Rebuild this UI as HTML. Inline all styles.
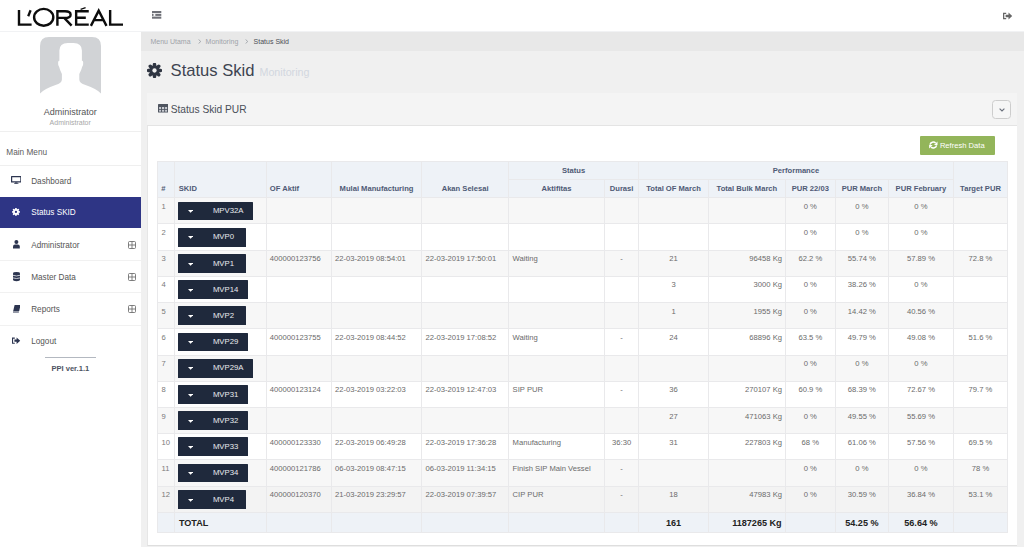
<!DOCTYPE html><html><head><meta charset="utf-8"><style>
html,body{margin:0;padding:0;width:1024px;height:547px;overflow:hidden;background:#fff;font-family:"Liberation Sans",sans-serif;}
div{box-sizing:border-box;}
</style></head><body><div style="position:relative;width:1024px;height:547px;overflow:hidden;">
<div style="position:absolute;left:0.00px;top:0.00px;width:1024.00px;height:31.00px;background:#ffffff;"></div>
<div style="position:absolute;left:0.00px;top:31.00px;width:1024.00px;height:1.00px;background:#f1f2f4;"></div>
<div style="position:absolute;left:141.00px;top:32.00px;width:883.00px;height:515.00px;background:#f0f0f0;"></div>
<div style="position:absolute;left:141.00px;top:32.00px;width:883.00px;height:19.00px;background:#e8e8e8;"></div>
<div style="position:absolute;left:0.00px;top:32.00px;width:141.00px;height:515.00px;background:#ffffff;"></div>
<svg style="position:absolute;left:0;top:0" width="140" height="31" viewBox="0 0 140 31"><g fill="none" stroke="#0d0d0d" stroke-width="2.4"><path d="M19 10.1 V24.6 H31.6"/><path d="M30.6 10.2 L28.2 16.2" stroke-width="2.3"/><ellipse cx="43.7" cy="17.3" rx="9.6" ry="8.4"/><path d="M57.4 25.7 V11.3 H65 Q70.6 11.3 70.6 14.65 Q70.6 17.9 65 17.9 H57.4 M64.2 17.9 L71.6 25.7"/><path d="M88.75 11.3 H76.15 V24.6 H88.75 M76.15 17.8 H85.8"/><path d="M80.6 9.3 L85.6 7.6" stroke-width="1.3"/><path d="M90.9 25.9 L98.7 10.6 L106.5 25.9 M93.6 20.15 H103.8"/><path d="M110.15 10.1 V24.6 H123"/></g></svg>
<svg style="position:absolute;left:151px;top:10px" width="12" height="10" viewBox="0 0 12 10"><g fill="#6f7178"><rect x="1" y="1" width="9.3" height="2.1"/><rect x="4.3" y="3.9" width="6" height="2"/><rect x="1" y="6.6" width="9.3" height="2.1"/><path d="M1 3.6 L3.5 4.9 L1 6.2Z"/></g></svg>
<svg style="position:absolute;left:1003px;top:11.5px" width="10" height="8" viewBox="0 0 10 8"><g fill="#666"><path d="M0 0.8 H3.2 V2 H1.3 V6 H3.2 V7.2 H0Z"/><path d="M2.6 2.8 H5.5 V0.6 L9.2 4 L5.5 7.4 V5.2 H2.6Z"/></g></svg>
<div style="position:absolute;left:150.50px;top:31.77px;line-height:20px;font-size:7px;color:#9ea3a9;font-weight:normal;white-space:nowrap;">Menu Utama</div>
<svg style="position:absolute;left:197.6px;top:39.4px" width="3.4" height="5" viewBox="0 0 3.4 5"><path d="M0.6 0.5 L2.8 2.5 L0.6 4.5" fill="none" stroke="#9ea3a9" stroke-width="0.9"/></svg>
<div style="position:absolute;left:205.60px;top:31.77px;line-height:20px;font-size:7px;color:#9ea3a9;font-weight:normal;white-space:nowrap;">Monitoring</div>
<svg style="position:absolute;left:245.2px;top:39.4px" width="3.4" height="5" viewBox="0 0 3.4 5"><path d="M0.6 0.5 L2.8 2.5 L0.6 4.5" fill="none" stroke="#9ea3a9" stroke-width="0.9"/></svg>
<div style="position:absolute;left:253.60px;top:31.77px;line-height:20px;font-size:7px;color:#4b4f56;font-weight:normal;white-space:nowrap;">Status Skid</div>
<svg style="position:absolute;left:146.9px;top:62.6px" width="15" height="15" viewBox="0 0 16 16"><circle cx="8" cy="8" r="5.5" fill="#2f3542"/><path d="M12.00 8.00 L14.40 8.00 M10.83 10.83 L12.53 12.53 M8.00 12.00 L8.00 14.40 M5.17 10.83 L3.47 12.53 M4.00 8.00 L1.60 8.00 M5.17 5.17 L3.47 3.47 M8.00 4.00 L8.00 1.60 M10.83 5.17 L12.53 3.47 " stroke="#2f3542" stroke-width="3.7" stroke-linecap="round"/><circle cx="8" cy="8" r="2.3" fill="#f0f0f0"/></svg>
<div style="position:absolute;left:170.60px;top:60.85px;line-height:20px;font-size:16.6px;color:#3d4450;font-weight:normal;white-space:nowrap;">Status Skid</div>
<div style="position:absolute;left:259.50px;top:62.19px;line-height:20px;font-size:10.7px;color:#d2d7df;font-weight:normal;white-space:nowrap;">Monitoring</div>
<div style="position:absolute;left:146.60px;top:93.00px;width:870.60px;height:452.80px;background:#ffffff;border-left:1px solid #e6e6e6;border-bottom:1px solid #dedede;"></div>
<div style="position:absolute;left:147.40px;top:93.00px;width:869.80px;height:33.00px;background:#f4f4f4;border-bottom:1px solid #e4e4e4;"></div>
<svg style="position:absolute;left:157.8px;top:104.3px" width="10.2" height="8.6" viewBox="0 0 10.2 8.6"><rect width="10.2" height="8.6" rx="0.6" fill="#4f5560"/><g fill="#c9ccd2"><rect x="1.1" y="3.0" width="2.0" height="2.0"/><rect x="4.0" y="3.0" width="2.2" height="2.0"/><rect x="7.1" y="3.0" width="2.0" height="2.0"/><rect x="1.1" y="5.8" width="2.0" height="1.9"/><rect x="4.0" y="5.8" width="2.2" height="1.9"/><rect x="7.1" y="5.8" width="2.0" height="1.9"/></g></svg>
<div style="position:absolute;left:170.70px;top:100.07px;line-height:20px;font-size:10.2px;color:#4a4f59;font-weight:normal;white-space:nowrap;">Status Skid PUR</div>
<div style="position:absolute;left:992px;top:100.2px;width:19px;height:19px;border:1.2px solid #cdcdcd;border-radius:3.5px;background:#f6f6f6;"></div>
<svg style="position:absolute;left:999px;top:107.5px" width="6" height="4" viewBox="0 0 6 4"><path d="M0.6 0.6 L3 3 L5.4 0.6" fill="none" stroke="#6a707c" stroke-width="1.15"/></svg>
<div style="position:absolute;left:919.80px;top:135.80px;width:75.30px;height:19.20px;background:#93b55a;border-radius:1px;"></div>
<svg style="position:absolute;left:929.4px;top:140.9px" width="8.6" height="8" viewBox="0 0 8.6 8"><g fill="none" stroke="#fff" stroke-width="1.5"><path d="M1 3.7 A3.3 3.3 0 0 1 6.6 2.1"/><path d="M7.6 4.3 A3.3 3.3 0 0 1 2 5.9"/></g><g fill="#fff"><path d="M5 4 H8.5 V0.5Z"/><path d="M3.6 4 H0.1 V7.5Z"/></g></svg>
<div style="position:absolute;left:939.90px;top:136.07px;line-height:20px;font-size:7.6px;color:#ffffff;font-weight:normal;white-space:nowrap;">Refresh Data</div>
<div style="position:absolute;left:157.30px;top:161.50px;width:850.30px;height:36.20px;background:#eef2f7;"></div>
<div style="position:absolute;left:157.30px;top:197.70px;width:850.30px;height:26.22px;background:#f7f7f7;"></div>
<div style="position:absolute;left:157.30px;top:223.92px;width:850.30px;height:26.22px;background:#ffffff;"></div>
<div style="position:absolute;left:157.30px;top:250.14px;width:850.30px;height:26.22px;background:#f7f7f7;"></div>
<div style="position:absolute;left:157.30px;top:276.36px;width:850.30px;height:26.22px;background:#ffffff;"></div>
<div style="position:absolute;left:157.30px;top:302.58px;width:850.30px;height:26.22px;background:#f7f7f7;"></div>
<div style="position:absolute;left:157.30px;top:328.80px;width:850.30px;height:26.22px;background:#ffffff;"></div>
<div style="position:absolute;left:157.30px;top:355.02px;width:850.30px;height:26.22px;background:#f7f7f7;"></div>
<div style="position:absolute;left:157.30px;top:381.24px;width:850.30px;height:26.22px;background:#ffffff;"></div>
<div style="position:absolute;left:157.30px;top:407.46px;width:850.30px;height:26.22px;background:#f7f7f7;"></div>
<div style="position:absolute;left:157.30px;top:433.68px;width:850.30px;height:26.22px;background:#ffffff;"></div>
<div style="position:absolute;left:157.30px;top:459.90px;width:850.30px;height:26.22px;background:#f7f7f7;"></div>
<div style="position:absolute;left:157.30px;top:486.12px;width:850.30px;height:26.22px;background:#f3f3f3;"></div>
<div style="position:absolute;left:157.30px;top:512.34px;width:850.30px;height:20.16px;background:#eef2f7;"></div>
<div style="position:absolute;left:157.30px;top:161.00px;width:850.30px;height:1.00px;background:#e9e9eb;"></div>
<div style="position:absolute;left:508.60px;top:179.10px;width:444.80px;height:1.00px;background:#e9e9eb;"></div>
<div style="position:absolute;left:157.30px;top:197.20px;width:850.30px;height:1.00px;background:#e9e9eb;"></div>
<div style="position:absolute;left:157.30px;top:223.42px;width:850.30px;height:1.00px;background:#e9e9eb;"></div>
<div style="position:absolute;left:157.30px;top:249.64px;width:850.30px;height:1.00px;background:#e9e9eb;"></div>
<div style="position:absolute;left:157.30px;top:275.86px;width:850.30px;height:1.00px;background:#e9e9eb;"></div>
<div style="position:absolute;left:157.30px;top:302.08px;width:850.30px;height:1.00px;background:#e9e9eb;"></div>
<div style="position:absolute;left:157.30px;top:328.30px;width:850.30px;height:1.00px;background:#e9e9eb;"></div>
<div style="position:absolute;left:157.30px;top:354.52px;width:850.30px;height:1.00px;background:#e9e9eb;"></div>
<div style="position:absolute;left:157.30px;top:380.74px;width:850.30px;height:1.00px;background:#e9e9eb;"></div>
<div style="position:absolute;left:157.30px;top:406.96px;width:850.30px;height:1.00px;background:#e9e9eb;"></div>
<div style="position:absolute;left:157.30px;top:433.18px;width:850.30px;height:1.00px;background:#e9e9eb;"></div>
<div style="position:absolute;left:157.30px;top:459.40px;width:850.30px;height:1.00px;background:#e9e9eb;"></div>
<div style="position:absolute;left:157.30px;top:485.62px;width:850.30px;height:1.00px;background:#e9e9eb;"></div>
<div style="position:absolute;left:157.30px;top:511.84px;width:850.30px;height:1.00px;background:#e9e9eb;"></div>
<div style="position:absolute;left:157.30px;top:532.00px;width:850.30px;height:1.00px;background:#e9e9eb;"></div>
<div style="position:absolute;left:156.80px;top:161.50px;width:1.00px;height:371.00px;background:#e9e9eb;"></div>
<div style="position:absolute;left:173.80px;top:161.50px;width:1.00px;height:371.00px;background:#e9e9eb;"></div>
<div style="position:absolute;left:265.90px;top:161.50px;width:1.00px;height:371.00px;background:#e9e9eb;"></div>
<div style="position:absolute;left:330.90px;top:161.50px;width:1.00px;height:371.00px;background:#e9e9eb;"></div>
<div style="position:absolute;left:421.10px;top:161.50px;width:1.00px;height:371.00px;background:#e9e9eb;"></div>
<div style="position:absolute;left:508.10px;top:161.50px;width:1.00px;height:371.00px;background:#e9e9eb;"></div>
<div style="position:absolute;left:604.10px;top:179.60px;width:1.00px;height:352.90px;background:#e9e9eb;"></div>
<div style="position:absolute;left:638.10px;top:161.50px;width:1.00px;height:371.00px;background:#e9e9eb;"></div>
<div style="position:absolute;left:708.00px;top:179.60px;width:1.00px;height:352.90px;background:#e9e9eb;"></div>
<div style="position:absolute;left:784.80px;top:179.60px;width:1.00px;height:352.90px;background:#e9e9eb;"></div>
<div style="position:absolute;left:834.80px;top:179.60px;width:1.00px;height:352.90px;background:#e9e9eb;"></div>
<div style="position:absolute;left:888.00px;top:179.60px;width:1.00px;height:352.90px;background:#e9e9eb;"></div>
<div style="position:absolute;left:952.90px;top:161.50px;width:1.00px;height:371.00px;background:#e9e9eb;"></div>
<div style="position:absolute;left:1007.10px;top:161.50px;width:1.00px;height:371.00px;background:#e9e9eb;"></div>
<div style="position:absolute;left:161.30px;top:178.77px;line-height:20px;font-size:7.6px;color:#4f5a75;font-weight:bold;white-space:nowrap;">#</div>
<div style="position:absolute;left:178.80px;top:178.77px;line-height:20px;font-size:7.6px;color:#4f5a75;font-weight:bold;white-space:nowrap;">SKID</div>
<div style="position:absolute;left:269.80px;top:178.77px;line-height:20px;font-size:7.6px;color:#4f5a75;font-weight:bold;white-space:nowrap;">OF Aktif</div>
<div style="position:absolute;left:276.50px;width:200px;text-align:center;top:178.77px;line-height:20px;font-size:7.6px;color:#4f5a75;font-weight:bold;white-space:nowrap;">Mulai Manufacturing</div>
<div style="position:absolute;left:365.10px;width:200px;text-align:center;top:178.77px;line-height:20px;font-size:7.6px;color:#4f5a75;font-weight:bold;white-space:nowrap;">Akan Selesai</div>
<div style="position:absolute;left:473.60px;width:200px;text-align:center;top:160.67px;line-height:20px;font-size:7.6px;color:#4f5a75;font-weight:bold;white-space:nowrap;">Status</div>
<div style="position:absolute;left:696.00px;width:200px;text-align:center;top:160.67px;line-height:20px;font-size:7.6px;color:#4f5a75;font-weight:bold;white-space:nowrap;">Performance</div>
<div style="position:absolute;left:456.60px;width:200px;text-align:center;top:178.77px;line-height:20px;font-size:7.6px;color:#4f5a75;font-weight:bold;white-space:nowrap;">Aktifitas</div>
<div style="position:absolute;left:521.60px;width:200px;text-align:center;top:178.77px;line-height:20px;font-size:7.6px;color:#4f5a75;font-weight:bold;white-space:nowrap;">Durasi</div>
<div style="position:absolute;left:573.55px;width:200px;text-align:center;top:178.77px;line-height:20px;font-size:7.6px;color:#4f5a75;font-weight:bold;white-space:nowrap;">Total OF March</div>
<div style="position:absolute;left:646.90px;width:200px;text-align:center;top:178.77px;line-height:20px;font-size:7.6px;color:#4f5a75;font-weight:bold;white-space:nowrap;">Total Bulk March</div>
<div style="position:absolute;left:710.30px;width:200px;text-align:center;top:178.77px;line-height:20px;font-size:7.6px;color:#4f5a75;font-weight:bold;white-space:nowrap;">PUR 22/03</div>
<div style="position:absolute;left:761.90px;width:200px;text-align:center;top:178.77px;line-height:20px;font-size:7.6px;color:#4f5a75;font-weight:bold;white-space:nowrap;">PUR March</div>
<div style="position:absolute;left:820.95px;width:200px;text-align:center;top:178.77px;line-height:20px;font-size:7.6px;color:#4f5a75;font-weight:bold;white-space:nowrap;">PUR February</div>
<div style="position:absolute;left:880.50px;width:200px;text-align:center;top:178.77px;line-height:20px;font-size:7.6px;color:#4f5a75;font-weight:bold;white-space:nowrap;">Target PUR</div>
<div style="position:absolute;left:161.50px;top:196.75px;line-height:20px;font-size:7.65px;color:#7a7a7a;font-weight:normal;white-space:nowrap;">1</div>
<div style="position:absolute;left:178.1px;top:201.50px;width:75.00px;height:18.8px;background:#1f293c;border-radius:0.6px;"></div>
<svg style="position:absolute;left:188.2px;top:210.10px" width="5.2" height="3" viewBox="0 0 5.2 3"><path d="M0 0 H5.2 L2.6 2.8Z" fill="#fff"/></svg>
<div style="position:absolute;left:212.90px;top:201.11px;line-height:20px;font-size:7.75px;color:#e9ebf0;font-weight:normal;white-space:nowrap;">MPV32A</div>
<div style="position:absolute;left:269.80px;top:196.75px;line-height:20px;font-size:7.65px;color:#6b6b6b;font-weight:normal;white-space:nowrap;"></div>
<div style="position:absolute;left:334.90px;top:196.75px;line-height:20px;font-size:7.65px;color:#6b6b6b;font-weight:normal;white-space:nowrap;"></div>
<div style="position:absolute;left:425.40px;top:196.75px;line-height:20px;font-size:7.65px;color:#6b6b6b;font-weight:normal;white-space:nowrap;"></div>
<div style="position:absolute;left:512.60px;top:196.75px;line-height:20px;font-size:7.65px;color:#6b6b6b;font-weight:normal;white-space:nowrap;"></div>
<div style="position:absolute;left:521.60px;width:200px;text-align:center;top:196.75px;line-height:20px;font-size:7.65px;color:#6b6b6b;font-weight:normal;white-space:nowrap;"></div>
<div style="position:absolute;left:573.55px;width:200px;text-align:center;top:196.75px;line-height:20px;font-size:7.65px;color:#6b6b6b;font-weight:normal;white-space:nowrap;"></div>
<div style="position:absolute;left:482.00px;width:300px;text-align:right;top:196.75px;line-height:20px;font-size:7.65px;color:#6b6b6b;font-weight:normal;white-space:nowrap;"></div>
<div style="position:absolute;left:710.30px;width:200px;text-align:center;top:196.75px;line-height:20px;font-size:7.65px;color:#6b6b6b;font-weight:normal;white-space:nowrap;">0 %</div>
<div style="position:absolute;left:761.90px;width:200px;text-align:center;top:196.75px;line-height:20px;font-size:7.65px;color:#6b6b6b;font-weight:normal;white-space:nowrap;">0 %</div>
<div style="position:absolute;left:820.95px;width:200px;text-align:center;top:196.75px;line-height:20px;font-size:7.65px;color:#6b6b6b;font-weight:normal;white-space:nowrap;">0 %</div>
<div style="position:absolute;left:880.50px;width:200px;text-align:center;top:196.75px;line-height:20px;font-size:7.65px;color:#6b6b6b;font-weight:normal;white-space:nowrap;"></div>
<div style="position:absolute;left:161.50px;top:222.97px;line-height:20px;font-size:7.65px;color:#7a7a7a;font-weight:normal;white-space:nowrap;">2</div>
<div style="position:absolute;left:178.1px;top:227.72px;width:68.30px;height:18.8px;background:#1f293c;border-radius:0.6px;"></div>
<svg style="position:absolute;left:188.2px;top:236.32px" width="5.2" height="3" viewBox="0 0 5.2 3"><path d="M0 0 H5.2 L2.6 2.8Z" fill="#fff"/></svg>
<div style="position:absolute;left:212.90px;top:227.33px;line-height:20px;font-size:7.75px;color:#e9ebf0;font-weight:normal;white-space:nowrap;">MVP0</div>
<div style="position:absolute;left:269.80px;top:222.97px;line-height:20px;font-size:7.65px;color:#6b6b6b;font-weight:normal;white-space:nowrap;"></div>
<div style="position:absolute;left:334.90px;top:222.97px;line-height:20px;font-size:7.65px;color:#6b6b6b;font-weight:normal;white-space:nowrap;"></div>
<div style="position:absolute;left:425.40px;top:222.97px;line-height:20px;font-size:7.65px;color:#6b6b6b;font-weight:normal;white-space:nowrap;"></div>
<div style="position:absolute;left:512.60px;top:222.97px;line-height:20px;font-size:7.65px;color:#6b6b6b;font-weight:normal;white-space:nowrap;"></div>
<div style="position:absolute;left:521.60px;width:200px;text-align:center;top:222.97px;line-height:20px;font-size:7.65px;color:#6b6b6b;font-weight:normal;white-space:nowrap;"></div>
<div style="position:absolute;left:573.55px;width:200px;text-align:center;top:222.97px;line-height:20px;font-size:7.65px;color:#6b6b6b;font-weight:normal;white-space:nowrap;"></div>
<div style="position:absolute;left:482.00px;width:300px;text-align:right;top:222.97px;line-height:20px;font-size:7.65px;color:#6b6b6b;font-weight:normal;white-space:nowrap;"></div>
<div style="position:absolute;left:710.30px;width:200px;text-align:center;top:222.97px;line-height:20px;font-size:7.65px;color:#6b6b6b;font-weight:normal;white-space:nowrap;">0 %</div>
<div style="position:absolute;left:761.90px;width:200px;text-align:center;top:222.97px;line-height:20px;font-size:7.65px;color:#6b6b6b;font-weight:normal;white-space:nowrap;">0 %</div>
<div style="position:absolute;left:820.95px;width:200px;text-align:center;top:222.97px;line-height:20px;font-size:7.65px;color:#6b6b6b;font-weight:normal;white-space:nowrap;">0 %</div>
<div style="position:absolute;left:880.50px;width:200px;text-align:center;top:222.97px;line-height:20px;font-size:7.65px;color:#6b6b6b;font-weight:normal;white-space:nowrap;"></div>
<div style="position:absolute;left:161.50px;top:249.19px;line-height:20px;font-size:7.65px;color:#7a7a7a;font-weight:normal;white-space:nowrap;">3</div>
<div style="position:absolute;left:178.1px;top:253.94px;width:68.30px;height:18.8px;background:#1f293c;border-radius:0.6px;"></div>
<svg style="position:absolute;left:188.2px;top:262.54px" width="5.2" height="3" viewBox="0 0 5.2 3"><path d="M0 0 H5.2 L2.6 2.8Z" fill="#fff"/></svg>
<div style="position:absolute;left:212.90px;top:253.55px;line-height:20px;font-size:7.75px;color:#e9ebf0;font-weight:normal;white-space:nowrap;">MVP1</div>
<div style="position:absolute;left:269.80px;top:249.19px;line-height:20px;font-size:7.65px;color:#6b6b6b;font-weight:normal;white-space:nowrap;">400000123756</div>
<div style="position:absolute;left:334.90px;top:249.19px;line-height:20px;font-size:7.65px;color:#6b6b6b;font-weight:normal;white-space:nowrap;">22-03-2019 08:54:01</div>
<div style="position:absolute;left:425.40px;top:249.19px;line-height:20px;font-size:7.65px;color:#6b6b6b;font-weight:normal;white-space:nowrap;">22-03-2019 17:50:01</div>
<div style="position:absolute;left:512.60px;top:249.19px;line-height:20px;font-size:7.65px;color:#6b6b6b;font-weight:normal;white-space:nowrap;">Waiting</div>
<div style="position:absolute;left:521.60px;width:200px;text-align:center;top:249.19px;line-height:20px;font-size:7.65px;color:#6b6b6b;font-weight:normal;white-space:nowrap;">-</div>
<div style="position:absolute;left:573.55px;width:200px;text-align:center;top:249.19px;line-height:20px;font-size:7.65px;color:#6b6b6b;font-weight:normal;white-space:nowrap;">21</div>
<div style="position:absolute;left:482.00px;width:300px;text-align:right;top:249.19px;line-height:20px;font-size:7.65px;color:#6b6b6b;font-weight:normal;white-space:nowrap;">96458 Kg</div>
<div style="position:absolute;left:710.30px;width:200px;text-align:center;top:249.19px;line-height:20px;font-size:7.65px;color:#6b6b6b;font-weight:normal;white-space:nowrap;">62.2 %</div>
<div style="position:absolute;left:761.90px;width:200px;text-align:center;top:249.19px;line-height:20px;font-size:7.65px;color:#6b6b6b;font-weight:normal;white-space:nowrap;">55.74 %</div>
<div style="position:absolute;left:820.95px;width:200px;text-align:center;top:249.19px;line-height:20px;font-size:7.65px;color:#6b6b6b;font-weight:normal;white-space:nowrap;">57.89 %</div>
<div style="position:absolute;left:880.50px;width:200px;text-align:center;top:249.19px;line-height:20px;font-size:7.65px;color:#6b6b6b;font-weight:normal;white-space:nowrap;">72.8 %</div>
<div style="position:absolute;left:161.50px;top:275.41px;line-height:20px;font-size:7.65px;color:#7a7a7a;font-weight:normal;white-space:nowrap;">4</div>
<div style="position:absolute;left:178.1px;top:280.16px;width:70.20px;height:18.8px;background:#1f293c;border-radius:0.6px;"></div>
<svg style="position:absolute;left:188.2px;top:288.76px" width="5.2" height="3" viewBox="0 0 5.2 3"><path d="M0 0 H5.2 L2.6 2.8Z" fill="#fff"/></svg>
<div style="position:absolute;left:212.90px;top:279.77px;line-height:20px;font-size:7.75px;color:#e9ebf0;font-weight:normal;white-space:nowrap;">MVP14</div>
<div style="position:absolute;left:269.80px;top:275.41px;line-height:20px;font-size:7.65px;color:#6b6b6b;font-weight:normal;white-space:nowrap;"></div>
<div style="position:absolute;left:334.90px;top:275.41px;line-height:20px;font-size:7.65px;color:#6b6b6b;font-weight:normal;white-space:nowrap;"></div>
<div style="position:absolute;left:425.40px;top:275.41px;line-height:20px;font-size:7.65px;color:#6b6b6b;font-weight:normal;white-space:nowrap;"></div>
<div style="position:absolute;left:512.60px;top:275.41px;line-height:20px;font-size:7.65px;color:#6b6b6b;font-weight:normal;white-space:nowrap;"></div>
<div style="position:absolute;left:521.60px;width:200px;text-align:center;top:275.41px;line-height:20px;font-size:7.65px;color:#6b6b6b;font-weight:normal;white-space:nowrap;"></div>
<div style="position:absolute;left:573.55px;width:200px;text-align:center;top:275.41px;line-height:20px;font-size:7.65px;color:#6b6b6b;font-weight:normal;white-space:nowrap;">3</div>
<div style="position:absolute;left:482.00px;width:300px;text-align:right;top:275.41px;line-height:20px;font-size:7.65px;color:#6b6b6b;font-weight:normal;white-space:nowrap;">3000 Kg</div>
<div style="position:absolute;left:710.30px;width:200px;text-align:center;top:275.41px;line-height:20px;font-size:7.65px;color:#6b6b6b;font-weight:normal;white-space:nowrap;">0 %</div>
<div style="position:absolute;left:761.90px;width:200px;text-align:center;top:275.41px;line-height:20px;font-size:7.65px;color:#6b6b6b;font-weight:normal;white-space:nowrap;">38.26 %</div>
<div style="position:absolute;left:820.95px;width:200px;text-align:center;top:275.41px;line-height:20px;font-size:7.65px;color:#6b6b6b;font-weight:normal;white-space:nowrap;">0 %</div>
<div style="position:absolute;left:880.50px;width:200px;text-align:center;top:275.41px;line-height:20px;font-size:7.65px;color:#6b6b6b;font-weight:normal;white-space:nowrap;"></div>
<div style="position:absolute;left:161.50px;top:301.63px;line-height:20px;font-size:7.65px;color:#7a7a7a;font-weight:normal;white-space:nowrap;">5</div>
<div style="position:absolute;left:178.1px;top:306.38px;width:68.30px;height:18.8px;background:#1f293c;border-radius:0.6px;"></div>
<svg style="position:absolute;left:188.2px;top:314.98px" width="5.2" height="3" viewBox="0 0 5.2 3"><path d="M0 0 H5.2 L2.6 2.8Z" fill="#fff"/></svg>
<div style="position:absolute;left:212.90px;top:305.99px;line-height:20px;font-size:7.75px;color:#e9ebf0;font-weight:normal;white-space:nowrap;">MVP2</div>
<div style="position:absolute;left:269.80px;top:301.63px;line-height:20px;font-size:7.65px;color:#6b6b6b;font-weight:normal;white-space:nowrap;"></div>
<div style="position:absolute;left:334.90px;top:301.63px;line-height:20px;font-size:7.65px;color:#6b6b6b;font-weight:normal;white-space:nowrap;"></div>
<div style="position:absolute;left:425.40px;top:301.63px;line-height:20px;font-size:7.65px;color:#6b6b6b;font-weight:normal;white-space:nowrap;"></div>
<div style="position:absolute;left:512.60px;top:301.63px;line-height:20px;font-size:7.65px;color:#6b6b6b;font-weight:normal;white-space:nowrap;"></div>
<div style="position:absolute;left:521.60px;width:200px;text-align:center;top:301.63px;line-height:20px;font-size:7.65px;color:#6b6b6b;font-weight:normal;white-space:nowrap;"></div>
<div style="position:absolute;left:573.55px;width:200px;text-align:center;top:301.63px;line-height:20px;font-size:7.65px;color:#6b6b6b;font-weight:normal;white-space:nowrap;">1</div>
<div style="position:absolute;left:482.00px;width:300px;text-align:right;top:301.63px;line-height:20px;font-size:7.65px;color:#6b6b6b;font-weight:normal;white-space:nowrap;">1955 Kg</div>
<div style="position:absolute;left:710.30px;width:200px;text-align:center;top:301.63px;line-height:20px;font-size:7.65px;color:#6b6b6b;font-weight:normal;white-space:nowrap;">0 %</div>
<div style="position:absolute;left:761.90px;width:200px;text-align:center;top:301.63px;line-height:20px;font-size:7.65px;color:#6b6b6b;font-weight:normal;white-space:nowrap;">14.42 %</div>
<div style="position:absolute;left:820.95px;width:200px;text-align:center;top:301.63px;line-height:20px;font-size:7.65px;color:#6b6b6b;font-weight:normal;white-space:nowrap;">40.56 %</div>
<div style="position:absolute;left:880.50px;width:200px;text-align:center;top:301.63px;line-height:20px;font-size:7.65px;color:#6b6b6b;font-weight:normal;white-space:nowrap;"></div>
<div style="position:absolute;left:161.50px;top:327.85px;line-height:20px;font-size:7.65px;color:#7a7a7a;font-weight:normal;white-space:nowrap;">6</div>
<div style="position:absolute;left:178.1px;top:332.60px;width:70.20px;height:18.8px;background:#1f293c;border-radius:0.6px;"></div>
<svg style="position:absolute;left:188.2px;top:341.20px" width="5.2" height="3" viewBox="0 0 5.2 3"><path d="M0 0 H5.2 L2.6 2.8Z" fill="#fff"/></svg>
<div style="position:absolute;left:212.90px;top:332.21px;line-height:20px;font-size:7.75px;color:#e9ebf0;font-weight:normal;white-space:nowrap;">MVP29</div>
<div style="position:absolute;left:269.80px;top:327.85px;line-height:20px;font-size:7.65px;color:#6b6b6b;font-weight:normal;white-space:nowrap;">400000123755</div>
<div style="position:absolute;left:334.90px;top:327.85px;line-height:20px;font-size:7.65px;color:#6b6b6b;font-weight:normal;white-space:nowrap;">22-03-2019 08:44:52</div>
<div style="position:absolute;left:425.40px;top:327.85px;line-height:20px;font-size:7.65px;color:#6b6b6b;font-weight:normal;white-space:nowrap;">22-03-2019 17:08:52</div>
<div style="position:absolute;left:512.60px;top:327.85px;line-height:20px;font-size:7.65px;color:#6b6b6b;font-weight:normal;white-space:nowrap;">Waiting</div>
<div style="position:absolute;left:521.60px;width:200px;text-align:center;top:327.85px;line-height:20px;font-size:7.65px;color:#6b6b6b;font-weight:normal;white-space:nowrap;">-</div>
<div style="position:absolute;left:573.55px;width:200px;text-align:center;top:327.85px;line-height:20px;font-size:7.65px;color:#6b6b6b;font-weight:normal;white-space:nowrap;">24</div>
<div style="position:absolute;left:482.00px;width:300px;text-align:right;top:327.85px;line-height:20px;font-size:7.65px;color:#6b6b6b;font-weight:normal;white-space:nowrap;">68896 Kg</div>
<div style="position:absolute;left:710.30px;width:200px;text-align:center;top:327.85px;line-height:20px;font-size:7.65px;color:#6b6b6b;font-weight:normal;white-space:nowrap;">63.5 %</div>
<div style="position:absolute;left:761.90px;width:200px;text-align:center;top:327.85px;line-height:20px;font-size:7.65px;color:#6b6b6b;font-weight:normal;white-space:nowrap;">49.79 %</div>
<div style="position:absolute;left:820.95px;width:200px;text-align:center;top:327.85px;line-height:20px;font-size:7.65px;color:#6b6b6b;font-weight:normal;white-space:nowrap;">49.08 %</div>
<div style="position:absolute;left:880.50px;width:200px;text-align:center;top:327.85px;line-height:20px;font-size:7.65px;color:#6b6b6b;font-weight:normal;white-space:nowrap;">51.6 %</div>
<div style="position:absolute;left:161.50px;top:354.07px;line-height:20px;font-size:7.65px;color:#7a7a7a;font-weight:normal;white-space:nowrap;">7</div>
<div style="position:absolute;left:178.1px;top:358.82px;width:75.00px;height:18.8px;background:#1f293c;border-radius:0.6px;"></div>
<svg style="position:absolute;left:188.2px;top:367.42px" width="5.2" height="3" viewBox="0 0 5.2 3"><path d="M0 0 H5.2 L2.6 2.8Z" fill="#fff"/></svg>
<div style="position:absolute;left:212.90px;top:358.43px;line-height:20px;font-size:7.75px;color:#e9ebf0;font-weight:normal;white-space:nowrap;">MVP29A</div>
<div style="position:absolute;left:269.80px;top:354.07px;line-height:20px;font-size:7.65px;color:#6b6b6b;font-weight:normal;white-space:nowrap;"></div>
<div style="position:absolute;left:334.90px;top:354.07px;line-height:20px;font-size:7.65px;color:#6b6b6b;font-weight:normal;white-space:nowrap;"></div>
<div style="position:absolute;left:425.40px;top:354.07px;line-height:20px;font-size:7.65px;color:#6b6b6b;font-weight:normal;white-space:nowrap;"></div>
<div style="position:absolute;left:512.60px;top:354.07px;line-height:20px;font-size:7.65px;color:#6b6b6b;font-weight:normal;white-space:nowrap;"></div>
<div style="position:absolute;left:521.60px;width:200px;text-align:center;top:354.07px;line-height:20px;font-size:7.65px;color:#6b6b6b;font-weight:normal;white-space:nowrap;"></div>
<div style="position:absolute;left:573.55px;width:200px;text-align:center;top:354.07px;line-height:20px;font-size:7.65px;color:#6b6b6b;font-weight:normal;white-space:nowrap;"></div>
<div style="position:absolute;left:482.00px;width:300px;text-align:right;top:354.07px;line-height:20px;font-size:7.65px;color:#6b6b6b;font-weight:normal;white-space:nowrap;"></div>
<div style="position:absolute;left:710.30px;width:200px;text-align:center;top:354.07px;line-height:20px;font-size:7.65px;color:#6b6b6b;font-weight:normal;white-space:nowrap;">0 %</div>
<div style="position:absolute;left:761.90px;width:200px;text-align:center;top:354.07px;line-height:20px;font-size:7.65px;color:#6b6b6b;font-weight:normal;white-space:nowrap;">0 %</div>
<div style="position:absolute;left:820.95px;width:200px;text-align:center;top:354.07px;line-height:20px;font-size:7.65px;color:#6b6b6b;font-weight:normal;white-space:nowrap;">0 %</div>
<div style="position:absolute;left:880.50px;width:200px;text-align:center;top:354.07px;line-height:20px;font-size:7.65px;color:#6b6b6b;font-weight:normal;white-space:nowrap;"></div>
<div style="position:absolute;left:161.50px;top:380.29px;line-height:20px;font-size:7.65px;color:#7a7a7a;font-weight:normal;white-space:nowrap;">8</div>
<div style="position:absolute;left:178.1px;top:385.04px;width:70.20px;height:18.8px;background:#1f293c;border-radius:0.6px;"></div>
<svg style="position:absolute;left:188.2px;top:393.64px" width="5.2" height="3" viewBox="0 0 5.2 3"><path d="M0 0 H5.2 L2.6 2.8Z" fill="#fff"/></svg>
<div style="position:absolute;left:212.90px;top:384.65px;line-height:20px;font-size:7.75px;color:#e9ebf0;font-weight:normal;white-space:nowrap;">MVP31</div>
<div style="position:absolute;left:269.80px;top:380.29px;line-height:20px;font-size:7.65px;color:#6b6b6b;font-weight:normal;white-space:nowrap;">400000123124</div>
<div style="position:absolute;left:334.90px;top:380.29px;line-height:20px;font-size:7.65px;color:#6b6b6b;font-weight:normal;white-space:nowrap;">22-03-2019 03:22:03</div>
<div style="position:absolute;left:425.40px;top:380.29px;line-height:20px;font-size:7.65px;color:#6b6b6b;font-weight:normal;white-space:nowrap;">22-03-2019 12:47:03</div>
<div style="position:absolute;left:512.60px;top:380.29px;line-height:20px;font-size:7.65px;color:#6b6b6b;font-weight:normal;white-space:nowrap;">SIP PUR</div>
<div style="position:absolute;left:521.60px;width:200px;text-align:center;top:380.29px;line-height:20px;font-size:7.65px;color:#6b6b6b;font-weight:normal;white-space:nowrap;">-</div>
<div style="position:absolute;left:573.55px;width:200px;text-align:center;top:380.29px;line-height:20px;font-size:7.65px;color:#6b6b6b;font-weight:normal;white-space:nowrap;">36</div>
<div style="position:absolute;left:482.00px;width:300px;text-align:right;top:380.29px;line-height:20px;font-size:7.65px;color:#6b6b6b;font-weight:normal;white-space:nowrap;">270107 Kg</div>
<div style="position:absolute;left:710.30px;width:200px;text-align:center;top:380.29px;line-height:20px;font-size:7.65px;color:#6b6b6b;font-weight:normal;white-space:nowrap;">60.9 %</div>
<div style="position:absolute;left:761.90px;width:200px;text-align:center;top:380.29px;line-height:20px;font-size:7.65px;color:#6b6b6b;font-weight:normal;white-space:nowrap;">68.39 %</div>
<div style="position:absolute;left:820.95px;width:200px;text-align:center;top:380.29px;line-height:20px;font-size:7.65px;color:#6b6b6b;font-weight:normal;white-space:nowrap;">72.67 %</div>
<div style="position:absolute;left:880.50px;width:200px;text-align:center;top:380.29px;line-height:20px;font-size:7.65px;color:#6b6b6b;font-weight:normal;white-space:nowrap;">79.7 %</div>
<div style="position:absolute;left:161.50px;top:406.51px;line-height:20px;font-size:7.65px;color:#7a7a7a;font-weight:normal;white-space:nowrap;">9</div>
<div style="position:absolute;left:178.1px;top:411.26px;width:70.20px;height:18.8px;background:#1f293c;border-radius:0.6px;"></div>
<svg style="position:absolute;left:188.2px;top:419.86px" width="5.2" height="3" viewBox="0 0 5.2 3"><path d="M0 0 H5.2 L2.6 2.8Z" fill="#fff"/></svg>
<div style="position:absolute;left:212.90px;top:410.87px;line-height:20px;font-size:7.75px;color:#e9ebf0;font-weight:normal;white-space:nowrap;">MVP32</div>
<div style="position:absolute;left:269.80px;top:406.51px;line-height:20px;font-size:7.65px;color:#6b6b6b;font-weight:normal;white-space:nowrap;"></div>
<div style="position:absolute;left:334.90px;top:406.51px;line-height:20px;font-size:7.65px;color:#6b6b6b;font-weight:normal;white-space:nowrap;"></div>
<div style="position:absolute;left:425.40px;top:406.51px;line-height:20px;font-size:7.65px;color:#6b6b6b;font-weight:normal;white-space:nowrap;"></div>
<div style="position:absolute;left:512.60px;top:406.51px;line-height:20px;font-size:7.65px;color:#6b6b6b;font-weight:normal;white-space:nowrap;"></div>
<div style="position:absolute;left:521.60px;width:200px;text-align:center;top:406.51px;line-height:20px;font-size:7.65px;color:#6b6b6b;font-weight:normal;white-space:nowrap;"></div>
<div style="position:absolute;left:573.55px;width:200px;text-align:center;top:406.51px;line-height:20px;font-size:7.65px;color:#6b6b6b;font-weight:normal;white-space:nowrap;">27</div>
<div style="position:absolute;left:482.00px;width:300px;text-align:right;top:406.51px;line-height:20px;font-size:7.65px;color:#6b6b6b;font-weight:normal;white-space:nowrap;">471063 Kg</div>
<div style="position:absolute;left:710.30px;width:200px;text-align:center;top:406.51px;line-height:20px;font-size:7.65px;color:#6b6b6b;font-weight:normal;white-space:nowrap;">0 %</div>
<div style="position:absolute;left:761.90px;width:200px;text-align:center;top:406.51px;line-height:20px;font-size:7.65px;color:#6b6b6b;font-weight:normal;white-space:nowrap;">49.55 %</div>
<div style="position:absolute;left:820.95px;width:200px;text-align:center;top:406.51px;line-height:20px;font-size:7.65px;color:#6b6b6b;font-weight:normal;white-space:nowrap;">55.69 %</div>
<div style="position:absolute;left:880.50px;width:200px;text-align:center;top:406.51px;line-height:20px;font-size:7.65px;color:#6b6b6b;font-weight:normal;white-space:nowrap;"></div>
<div style="position:absolute;left:161.50px;top:432.73px;line-height:20px;font-size:7.65px;color:#7a7a7a;font-weight:normal;white-space:nowrap;">10</div>
<div style="position:absolute;left:178.1px;top:437.48px;width:70.20px;height:18.8px;background:#1f293c;border-radius:0.6px;"></div>
<svg style="position:absolute;left:188.2px;top:446.08px" width="5.2" height="3" viewBox="0 0 5.2 3"><path d="M0 0 H5.2 L2.6 2.8Z" fill="#fff"/></svg>
<div style="position:absolute;left:212.90px;top:437.09px;line-height:20px;font-size:7.75px;color:#e9ebf0;font-weight:normal;white-space:nowrap;">MVP33</div>
<div style="position:absolute;left:269.80px;top:432.73px;line-height:20px;font-size:7.65px;color:#6b6b6b;font-weight:normal;white-space:nowrap;">400000123330</div>
<div style="position:absolute;left:334.90px;top:432.73px;line-height:20px;font-size:7.65px;color:#6b6b6b;font-weight:normal;white-space:nowrap;">22-03-2019 06:49:28</div>
<div style="position:absolute;left:425.40px;top:432.73px;line-height:20px;font-size:7.65px;color:#6b6b6b;font-weight:normal;white-space:nowrap;">22-03-2019 17:36:28</div>
<div style="position:absolute;left:512.60px;top:432.73px;line-height:20px;font-size:7.65px;color:#6b6b6b;font-weight:normal;white-space:nowrap;">Manufacturing</div>
<div style="position:absolute;left:521.60px;width:200px;text-align:center;top:432.73px;line-height:20px;font-size:7.65px;color:#6b6b6b;font-weight:normal;white-space:nowrap;">36:30</div>
<div style="position:absolute;left:573.55px;width:200px;text-align:center;top:432.73px;line-height:20px;font-size:7.65px;color:#6b6b6b;font-weight:normal;white-space:nowrap;">31</div>
<div style="position:absolute;left:482.00px;width:300px;text-align:right;top:432.73px;line-height:20px;font-size:7.65px;color:#6b6b6b;font-weight:normal;white-space:nowrap;">227803 Kg</div>
<div style="position:absolute;left:710.30px;width:200px;text-align:center;top:432.73px;line-height:20px;font-size:7.65px;color:#6b6b6b;font-weight:normal;white-space:nowrap;">68 %</div>
<div style="position:absolute;left:761.90px;width:200px;text-align:center;top:432.73px;line-height:20px;font-size:7.65px;color:#6b6b6b;font-weight:normal;white-space:nowrap;">61.06 %</div>
<div style="position:absolute;left:820.95px;width:200px;text-align:center;top:432.73px;line-height:20px;font-size:7.65px;color:#6b6b6b;font-weight:normal;white-space:nowrap;">57.56 %</div>
<div style="position:absolute;left:880.50px;width:200px;text-align:center;top:432.73px;line-height:20px;font-size:7.65px;color:#6b6b6b;font-weight:normal;white-space:nowrap;">69.5 %</div>
<div style="position:absolute;left:161.50px;top:458.95px;line-height:20px;font-size:7.65px;color:#7a7a7a;font-weight:normal;white-space:nowrap;">11</div>
<div style="position:absolute;left:178.1px;top:463.70px;width:70.20px;height:18.8px;background:#1f293c;border-radius:0.6px;"></div>
<svg style="position:absolute;left:188.2px;top:472.30px" width="5.2" height="3" viewBox="0 0 5.2 3"><path d="M0 0 H5.2 L2.6 2.8Z" fill="#fff"/></svg>
<div style="position:absolute;left:212.90px;top:463.31px;line-height:20px;font-size:7.75px;color:#e9ebf0;font-weight:normal;white-space:nowrap;">MVP34</div>
<div style="position:absolute;left:269.80px;top:458.95px;line-height:20px;font-size:7.65px;color:#6b6b6b;font-weight:normal;white-space:nowrap;">400000121786</div>
<div style="position:absolute;left:334.90px;top:458.95px;line-height:20px;font-size:7.65px;color:#6b6b6b;font-weight:normal;white-space:nowrap;">06-03-2019 08:47:15</div>
<div style="position:absolute;left:425.40px;top:458.95px;line-height:20px;font-size:7.65px;color:#6b6b6b;font-weight:normal;white-space:nowrap;">06-03-2019 11:34:15</div>
<div style="position:absolute;left:512.60px;top:458.95px;line-height:20px;font-size:7.65px;color:#6b6b6b;font-weight:normal;white-space:nowrap;">Finish SIP Main Vessel</div>
<div style="position:absolute;left:521.60px;width:200px;text-align:center;top:458.95px;line-height:20px;font-size:7.65px;color:#6b6b6b;font-weight:normal;white-space:nowrap;">-</div>
<div style="position:absolute;left:573.55px;width:200px;text-align:center;top:458.95px;line-height:20px;font-size:7.65px;color:#6b6b6b;font-weight:normal;white-space:nowrap;"></div>
<div style="position:absolute;left:482.00px;width:300px;text-align:right;top:458.95px;line-height:20px;font-size:7.65px;color:#6b6b6b;font-weight:normal;white-space:nowrap;"></div>
<div style="position:absolute;left:710.30px;width:200px;text-align:center;top:458.95px;line-height:20px;font-size:7.65px;color:#6b6b6b;font-weight:normal;white-space:nowrap;">0 %</div>
<div style="position:absolute;left:761.90px;width:200px;text-align:center;top:458.95px;line-height:20px;font-size:7.65px;color:#6b6b6b;font-weight:normal;white-space:nowrap;">0 %</div>
<div style="position:absolute;left:820.95px;width:200px;text-align:center;top:458.95px;line-height:20px;font-size:7.65px;color:#6b6b6b;font-weight:normal;white-space:nowrap;">0 %</div>
<div style="position:absolute;left:880.50px;width:200px;text-align:center;top:458.95px;line-height:20px;font-size:7.65px;color:#6b6b6b;font-weight:normal;white-space:nowrap;">78 %</div>
<div style="position:absolute;left:161.50px;top:485.17px;line-height:20px;font-size:7.65px;color:#7a7a7a;font-weight:normal;white-space:nowrap;">12</div>
<div style="position:absolute;left:178.1px;top:489.92px;width:68.30px;height:18.8px;background:#1f293c;border-radius:0.6px;"></div>
<svg style="position:absolute;left:188.2px;top:498.52px" width="5.2" height="3" viewBox="0 0 5.2 3"><path d="M0 0 H5.2 L2.6 2.8Z" fill="#fff"/></svg>
<div style="position:absolute;left:212.90px;top:489.53px;line-height:20px;font-size:7.75px;color:#e9ebf0;font-weight:normal;white-space:nowrap;">MVP4</div>
<div style="position:absolute;left:269.80px;top:485.17px;line-height:20px;font-size:7.65px;color:#6b6b6b;font-weight:normal;white-space:nowrap;">400000120370</div>
<div style="position:absolute;left:334.90px;top:485.17px;line-height:20px;font-size:7.65px;color:#6b6b6b;font-weight:normal;white-space:nowrap;">21-03-2019 23:29:57</div>
<div style="position:absolute;left:425.40px;top:485.17px;line-height:20px;font-size:7.65px;color:#6b6b6b;font-weight:normal;white-space:nowrap;">22-03-2019 07:39:57</div>
<div style="position:absolute;left:512.60px;top:485.17px;line-height:20px;font-size:7.65px;color:#6b6b6b;font-weight:normal;white-space:nowrap;">CIP PUR</div>
<div style="position:absolute;left:521.60px;width:200px;text-align:center;top:485.17px;line-height:20px;font-size:7.65px;color:#6b6b6b;font-weight:normal;white-space:nowrap;">-</div>
<div style="position:absolute;left:573.55px;width:200px;text-align:center;top:485.17px;line-height:20px;font-size:7.65px;color:#6b6b6b;font-weight:normal;white-space:nowrap;">18</div>
<div style="position:absolute;left:482.00px;width:300px;text-align:right;top:485.17px;line-height:20px;font-size:7.65px;color:#6b6b6b;font-weight:normal;white-space:nowrap;">47983 Kg</div>
<div style="position:absolute;left:710.30px;width:200px;text-align:center;top:485.17px;line-height:20px;font-size:7.65px;color:#6b6b6b;font-weight:normal;white-space:nowrap;">0 %</div>
<div style="position:absolute;left:761.90px;width:200px;text-align:center;top:485.17px;line-height:20px;font-size:7.65px;color:#6b6b6b;font-weight:normal;white-space:nowrap;">30.59 %</div>
<div style="position:absolute;left:820.95px;width:200px;text-align:center;top:485.17px;line-height:20px;font-size:7.65px;color:#6b6b6b;font-weight:normal;white-space:nowrap;">36.84 %</div>
<div style="position:absolute;left:880.50px;width:200px;text-align:center;top:485.17px;line-height:20px;font-size:7.65px;color:#6b6b6b;font-weight:normal;white-space:nowrap;">53.1 %</div>
<div style="position:absolute;left:178.90px;top:513.19px;line-height:20px;font-size:9.1px;color:#222;font-weight:bold;white-space:nowrap;">TOTAL</div>
<div style="position:absolute;left:573.55px;width:200px;text-align:center;top:513.19px;line-height:20px;font-size:9.1px;color:#222;font-weight:bold;white-space:nowrap;">161</div>
<div style="position:absolute;left:481.70px;width:300px;text-align:right;top:513.19px;line-height:20px;font-size:9.1px;color:#222;font-weight:bold;white-space:nowrap;">1187265 Kg</div>
<div style="position:absolute;left:761.90px;width:200px;text-align:center;top:513.19px;line-height:20px;font-size:9.1px;color:#222;font-weight:bold;white-space:nowrap;">54.25 %</div>
<div style="position:absolute;left:820.95px;width:200px;text-align:center;top:513.19px;line-height:20px;font-size:9.1px;color:#222;font-weight:bold;white-space:nowrap;">56.64 %</div>
<svg style="position:absolute;left:40px;top:37px" width="61" height="57" viewBox="0 0 61 57"><path fill="#d1d3d6" d="M0 9 Q0 0 9 0 H52 Q61 0 61 9 V56.5 Q57 52 45.5 48 Q39.3 46 39.3 42.5 V37 Q41.3 33.5 42.2 29.8 Q43.4 28.8 43.2 25.5 Q43 23.2 41.9 23.8 V13.5 Q41.9 5.9 33.5 5.9 H27.8 Q19.4 5.9 19.4 13.5 V23.8 Q18.3 23.2 18.1 25.5 Q17.9 28.8 19.1 29.8 Q20 33.5 21.9 37 V42.5 Q21.9 46 15.5 48 Q4 52 0 56.5Z"/></svg>
<div style="position:absolute;left:-29.70px;width:200px;text-align:center;top:101.78px;line-height:20px;font-size:9.0px;color:#555;font-weight:normal;white-space:nowrap;">Administrator</div>
<div style="position:absolute;left:-29.80px;width:200px;text-align:center;top:112.97px;line-height:20px;font-size:7.0px;color:#a8a8a8;font-weight:normal;white-space:nowrap;">Administrator</div>
<div style="position:absolute;left:0.00px;top:131.30px;width:141.00px;height:1.00px;background:#efefef;"></div>
<div style="position:absolute;left:6.30px;top:142.74px;line-height:20px;font-size:8.25px;color:#606060;font-weight:normal;white-space:nowrap;">Main Menu</div>
<div style="position:absolute;left:0.00px;top:164.70px;width:141.00px;height:1.00px;background:#efefef;"></div>
<div style="position:absolute;left:0.00px;top:196.80px;width:141.00px;height:31.60px;background:#2e3585;"></div>
<div style="position:absolute;left:0.00px;top:260.30px;width:141.00px;height:1.00px;background:#f1f1f1;"></div>
<div style="position:absolute;left:0.00px;top:292.40px;width:141.00px;height:1.00px;background:#f1f1f1;"></div>
<div style="position:absolute;left:0.00px;top:324.50px;width:141.00px;height:1.00px;background:#f1f1f1;"></div>
<div style="position:absolute;left:44.50px;top:356.60px;width:51.50px;height:1.00px;background:#b3b8c0;"></div>
<div style="position:absolute;left:31.20px;top:171.56px;line-height:20px;font-size:8.2px;color:#555;font-weight:normal;white-space:nowrap;">Dashboard</div>
<div style="position:absolute;left:31.20px;top:203.46px;line-height:20px;font-size:8.2px;color:#ffffff;font-weight:normal;white-space:nowrap;">Status SKID</div>
<div style="position:absolute;left:31.20px;top:235.86px;line-height:20px;font-size:8.2px;color:#555;font-weight:normal;white-space:nowrap;">Administrator</div>
<div style="position:absolute;left:31.20px;top:267.96px;line-height:20px;font-size:8.2px;color:#555;font-weight:normal;white-space:nowrap;">Master Data</div>
<div style="position:absolute;left:31.20px;top:300.06px;line-height:20px;font-size:8.2px;color:#555;font-weight:normal;white-space:nowrap;">Reports</div>
<div style="position:absolute;left:31.20px;top:332.06px;line-height:20px;font-size:8.2px;color:#555;font-weight:normal;white-space:nowrap;">Logout</div>
<div style="position:absolute;left:-29.70px;width:200px;text-align:center;top:358.98px;line-height:20px;font-size:7.57px;color:#4d5562;font-weight:bold;white-space:nowrap;">PPI ver.1.1</div>
<svg style="position:absolute;left:10.8px;top:175.8px" width="10.5" height="8.4" viewBox="0 0 10.5 8.4"><g fill="#2c3550"><path fill-rule="evenodd" d="M0 0.6 Q0 0 0.6 0 H9.9 Q10.5 0 10.5 0.6 V6.4 H0Z M1.2 1.2 V5.2 H9.3 V1.2Z"/><rect x="4" y="6.4" width="2.5" height="1.2"/><rect x="3" y="7.4" width="4.5" height="1"/></g></svg>
<svg style="position:absolute;left:12.1px;top:208.0px" width="7.9" height="7.9" viewBox="0 0 16 16"><circle cx="8" cy="8" r="5.5" fill="#ffffff"/><path d="M12.00 8.00 L14.40 8.00 M10.83 10.83 L12.53 12.53 M8.00 12.00 L8.00 14.40 M5.17 10.83 L3.47 12.53 M4.00 8.00 L1.60 8.00 M5.17 5.17 L3.47 3.47 M8.00 4.00 L8.00 1.60 M10.83 5.17 L12.53 3.47 " stroke="#ffffff" stroke-width="3.7" stroke-linecap="round"/><circle cx="8" cy="8" r="2.3" fill="#2e3585"/></svg>
<svg style="position:absolute;left:13px;top:240.3px" width="6.8" height="8.4" viewBox="0 0 6.8 8.4"><g fill="#2c3550"><circle cx="3.4" cy="2" r="2"/><path d="M0 8.4 V6.6 Q0 4.4 2 4.4 H4.8 Q6.8 4.4 6.8 6.6 V8.4Z"/></g></svg>
<svg style="position:absolute;left:13px;top:272.4px" width="7" height="9.2" viewBox="0 0 7 9.2"><path fill="#2c3550" d="M0 1.4 Q0 0 3.5 0 Q7 0 7 1.4 V7.8 Q7 9.2 3.5 9.2 Q0 9.2 0 7.8Z"/><g fill="none" stroke="#fff" stroke-width="0.75"><path d="M0 3.3 Q3.5 4.6 7 3.3"/><path d="M0 5.9 Q3.5 7.2 7 5.9"/></g></svg>
<svg style="position:absolute;left:12.6px;top:305.2px" width="7.6" height="7.6" viewBox="0 0 7.6 7.6"><g fill="#2c3550"><path d="M1.6 0 H7.6 L6.2 6 H0.2Z"/><path d="M0 6.4 H6 L5.8 7.6 H0Z"/></g></svg>
<svg style="position:absolute;left:12.4px;top:336.8px" width="8.5" height="7.4" viewBox="0 0 8.5 7.4"><g fill="#2c3550"><path d="M0 0.6 H2.8 V1.7 H1.1 V5.7 H2.8 V6.8 H0Z"/><path d="M2.4 2.6 H4.6 V0.5 L8.2 3.7 L4.6 6.9 V4.8 H2.4Z"/></g></svg>
<svg style="position:absolute;left:127.5px;top:240.85px" width="8" height="8" viewBox="0 0 8 8"><g fill="none" stroke="#6a6a6a" stroke-width="0.85"><rect x="0.5" y="0.5" width="7" height="7" rx="1"/><path d="M4 0.5 V7.5 M0.5 4 H7.5"/></g></svg>
<svg style="position:absolute;left:127.5px;top:273.00px" width="8" height="8" viewBox="0 0 8 8"><g fill="none" stroke="#6a6a6a" stroke-width="0.85"><rect x="0.5" y="0.5" width="7" height="7" rx="1"/><path d="M4 0.5 V7.5 M0.5 4 H7.5"/></g></svg>
<svg style="position:absolute;left:127.5px;top:305.10px" width="8" height="8" viewBox="0 0 8 8"><g fill="none" stroke="#6a6a6a" stroke-width="0.85"><rect x="0.5" y="0.5" width="7" height="7" rx="1"/><path d="M4 0.5 V7.5 M0.5 4 H7.5"/></g></svg>
</div></body></html>
